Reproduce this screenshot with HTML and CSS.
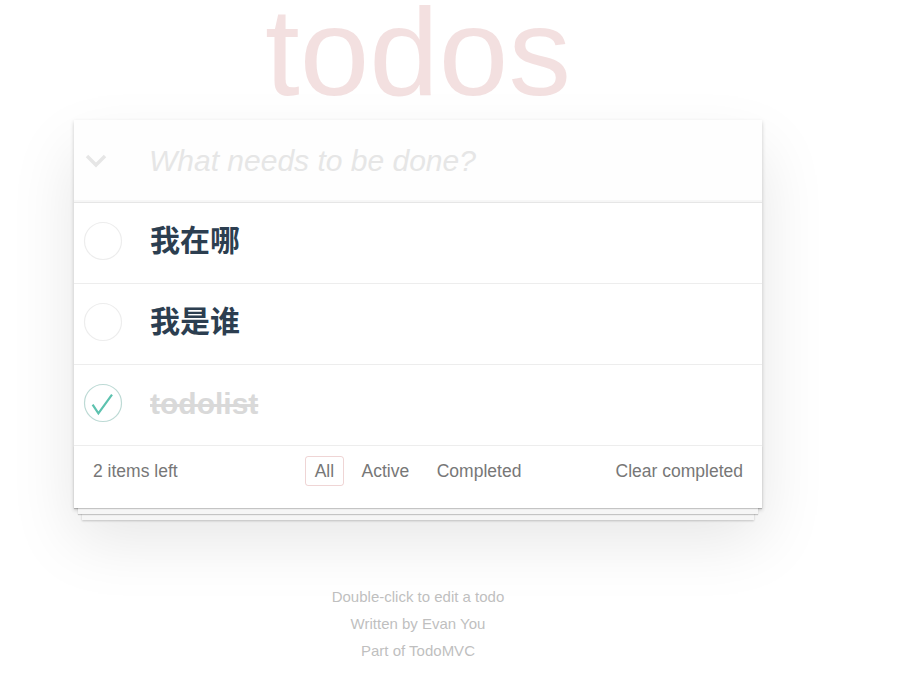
FILE: index.html
```html
<!DOCTYPE html>
<html lang="en">
<head>
    <meta charset="UTF-8">
    <meta name="viewport" content="width=device-width, initial-scale=1.0">
    <title>todos</title>
    <link rel="stylesheet" href="styles.css">
</head>
<body>

    <div class="page">
        <h1>todos</h1>

        <section class="todoapp">
            <!-- New todo input -->
            <header class="new-row">
                <span class="toggle-all">
                    <svg width="22" height="14" viewBox="0 0 22 14">
                        <polyline points="2,2 11,11 20,2" fill="none" stroke="#e6e6e6" stroke-width="3.5"/>
                    </svg>
                </span>
                <input class="new-todo" type="text" placeholder="What needs to be done?">
            </header>

            <!-- Todo list -->
            <ul class="todo-list">
                <li class="todo">
                    <span class="toggle">
                        <svg width="40" height="40" viewBox="0 0 40 40">
                            <circle cx="20" cy="20" r="18.5" fill="none" stroke="#ededed" stroke-width="1.2"/>
                        </svg>
                    </span>
                    <label>我在哪</label>
                </li>
                <li class="todo">
                    <span class="toggle">
                        <svg width="40" height="40" viewBox="0 0 40 40">
                            <circle cx="20" cy="20" r="18.5" fill="none" stroke="#ededed" stroke-width="1.2"/>
                        </svg>
                    </span>
                    <label>我是谁</label>
                </li>
                <li class="todo completed">
                    <span class="toggle">
                        <svg width="40" height="40" viewBox="0 0 40 40">
                            <circle cx="20" cy="20" r="18.5" fill="none" stroke="#bddad5" stroke-width="1.2"/>
                            <polyline points="9.6,21.6 15.4,30.4 29,11.6" fill="none" stroke="#5dc2af" stroke-width="2.2"/>
                        </svg>
                    </span>
                    <label>todolist</label>
                </li>
            </ul>

            <!-- Footer with count and filters -->
            <footer class="footer">
                <span class="todo-count">2 items left</span>
                <ul class="filters">
                    <li><a href="#/all" class="selected">All</a></li>
                    <li><a href="#/active">Active</a></li>
                    <li><a href="#/completed">Completed</a></li>
                </ul>
                <button class="clear-completed">Clear completed</button>
            </footer>
        </section>

        <footer class="info">
            <p>Double-click to edit a todo</p>
            <p>Written by Evan You</p>
            <p>Part of TodoMVC</p>
        </footer>
    </div>

</body>
</html>
```

FILE: styles.css
```css
body {
    margin: 0;
    padding: 0;
    background: #fff;
    font-family: "Liberation Sans", "Noto Sans CJK SC", sans-serif;
    color: #4d4d4d;
}

.page {
    width: 688px;
    margin-left: 74px;
}

h1 {
    margin: 0 0 16px;
    height: 104px;
    line-height: 104px;
    font-size: 125px;
    font-weight: 100;
    text-align: center;
    color: rgba(175, 47, 47, 0.15);
}

/* Card */
.todoapp {
    background: #fff;
    box-shadow: 0 2px 4px rgba(0, 0, 0, 0.2), 0 31px 62px rgba(0, 0, 0, 0.1);
}

.new-row {
    display: flex;
    align-items: center;
    height: 82px;
    border-bottom: 1px solid #e6e6e6;
    background: rgba(0, 0, 0, 0.003);
    box-shadow: inset 0 -2px 1px rgba(0, 0, 0, 0.03);
}

.toggle-all {
    width: 75px;
    display: flex;
    padding-left: 11px;
    box-sizing: border-box;
}

.new-todo {
    flex: 1;
    border: none;
    outline: none;
    background: transparent;
    padding: 0;
    font-family: inherit;
    font-size: 30px;
    line-height: 42px;
    color: #4d4d4d;
}

.new-todo::placeholder {
    font-style: italic;
    color: #e6e6e6;
}

/* List */
.todo-list {
    list-style: none;
    margin: 0;
    padding: 0;
}

.todo {
    display: flex;
    align-items: center;
    height: 80px;
    padding-left: 9px;
    border-bottom: 1px solid #ededed;
}

.toggle {
    display: flex;
    width: 40px;
    margin-bottom: 5px;
}

.todo label {
    margin-left: 27px;
    padding-bottom: 4px;
    font-size: 30px;
    font-weight: bold;
    line-height: 36px;
    color: #2c3e50;
}

.todo.completed label {
    padding-bottom: 2px;
    color: #d9d9d9;
    text-decoration: line-through;
}

/* Footer */
.footer {
    position: relative;
    display: grid;
    grid-template-columns: 1fr auto 1fr;
    align-items: center;
    align-content: start;
    height: 62px;
    box-sizing: border-box;
    padding: 10px 19px 0;
    font-size: 17.5px;
    color: #777;
}

.footer::before {
    content: '';
    position: absolute;
    left: 0;
    right: 0;
    bottom: 0;
    height: 62px;
    overflow: hidden;
    box-shadow: 0 1px 1px rgba(0, 0, 0, 0.2),
                0 10px 0 -4px #f6f6f6,
                0 11px 1px -4px rgba(0, 0, 0, 0.2),
                0 20px 0 -8px #f6f6f6,
                0 21px 2px -8px rgba(0, 0, 0, 0.2);
}

.filters {
    display: flex;
    gap: 7.5px;
    list-style: none;
    margin: 0;
    padding: 0;
}

.filters a {
    display: block;
    padding: 4px 9px;
    line-height: 20px;
    border: 1px solid transparent;
    border-radius: 3px;
    color: inherit;
    text-decoration: none;
}

.filters a.selected {
    border-color: rgba(175, 47, 47, 0.2);
}

.clear-completed {
    justify-self: end;
    border: none;
    background: none;
    padding: 0;
    font-family: inherit;
    font-size: 17.5px;
    color: #777;
    cursor: pointer;
}

/* Info */
.info {
    margin-top: 75px;
    text-align: center;
    font-size: 15px;
    line-height: 27px;
    color: #bfbfbf;
}

.info p {
    margin: 0;
}
```
